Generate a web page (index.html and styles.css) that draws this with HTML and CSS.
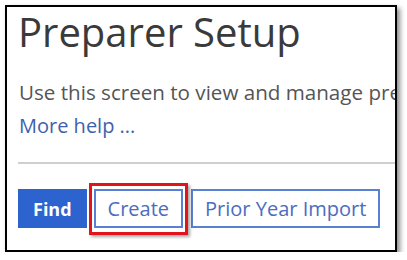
FILE: index.html
```html
<!DOCTYPE html>
<html>
<head>
<meta charset="utf-8">
<link rel="stylesheet" href="styles.css">
</head>
<body>
<div class="frame">
  <h1 class="title">Preparer Setup</h1>
  <p class="desc">Use this screen to view and manage preparers for your office.</p>
  <a class="help" href="#">More help ...</a>
  <hr class="rule">
  <div class="actions">
    <button class="btn btn-primary">Find</button>
    <button class="btn btn-outline highlighted">Create</button>
    <button class="btn btn-outline">Prior Year Import</button>
  </div>
</div>
</body>
</html>
```

FILE: styles.css
```css
html, body {
  margin: 0;
  padding: 0;
  background: #ffffff;
}
body {
  font-family: "Open Sans", "DejaVu Sans", sans-serif;
}
.frame {
  margin: 5px 0 0 5px;
  width: 377px;
  height: 243px;
  border: 2px solid #000;
  box-shadow: 3px 3px 5px rgba(0,0,0,0.45);
  overflow: hidden;
  display: flex;
  flex-direction: column;
  align-items: flex-start;
  padding-left: 11px;
  box-sizing: content-box;
  white-space: nowrap;
}
.title {
  margin: 3px 0 0 0;
  font-size: 40px;
  line-height: 44px;
  font-weight: 400;
  color: #3a3a3a;
}
.desc {
  margin: 25px 0 0 1px;
  font-size: 20.6px;
  line-height: 26px;
  color: #555;
}
.help {
  margin: 8px 0 0 1px;
  font-size: 20px;
  line-height: 26px;
  color: #4161ad;
  text-decoration: none;
}
.rule {
  align-self: stretch;
  margin: 23px 0 0 0;
  border: 0;
  border-top: 2px solid #cfcfcf;
  height: 0;
}
.actions {
  margin-top: 25px;
  display: flex;
}
.btn {
  height: 39px;
  font-family: "Open Sans", "DejaVu Sans", sans-serif;
  padding: 0 12px;
  box-sizing: border-box;
  border-radius: 0;
  cursor: pointer;
}
.btn-primary {
  font-size: 18px;
  padding: 0 14px;
  background: #2c63cf;
  border: 1px solid #2c63cf;
  color: #fff;
  font-weight: 700;
}
.btn-outline {
  font-size: 20px;
  background: #fff;
  border: 2px solid #5a80d4;
  color: #4b6cc0;
}
.highlighted {
  position: relative;
  margin-left: 7px;
}
.highlighted::after {
  content: "";
  position: absolute;
  left: -7px;
  right: -7px;
  top: -8px;
  bottom: -9px;
  border: 3px solid #e2131b;
  box-shadow: 2px 2px 3px rgba(0,0,0,0.35);
}
.highlighted + .btn {
  margin-left: 8px;
}
```
